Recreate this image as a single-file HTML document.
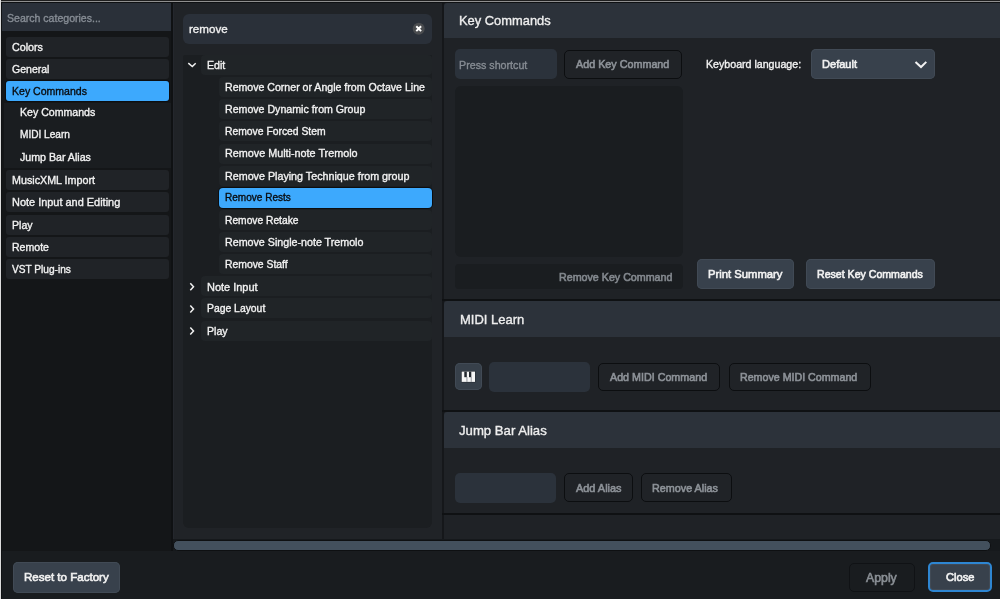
<!DOCTYPE html>
<html><head><meta charset="utf-8">
<style>
*{box-sizing:border-box;margin:0;padding:0}
html,body{width:1000px;height:599px;overflow:hidden;background:#191c1f;font-family:"Liberation Sans",sans-serif}
.a{position:absolute}
.t{position:absolute;white-space:nowrap;line-height:1;font-family:"Liberation Sans",sans-serif;-webkit-text-stroke:0.35px currentColor;transform-origin:0 0;will-change:transform}
.li{position:absolute;left:6px;width:163px;height:20px;border-radius:3px;background:#202327}
.li.sel,.tr.sel{background:#3da9fd;box-shadow:0 0 0 1px #0c0e10}
.tr{position:absolute;height:20px;border-radius:4px;background:#202427;left:0;right:0}
.hdr{position:absolute;left:444px;width:556px;background:#2c323a;border-top-left-radius:3px}
.cnt{position:absolute;left:444px;width:556px;background:#1f2226}
.dl{position:absolute;left:442px;width:558px;height:2px;background:#0f1113}
.fld{position:absolute;background:#2b323b;border-radius:5px}
.btn{position:absolute;border-radius:5px;border:1.6px solid #0c0e10;background:#202327}
.bl{position:absolute;border-radius:5px;background:#38414c;box-shadow:inset 0 0 0 1px #414a55}
</style></head><body>
<!-- left panel -->
<div class="a" style="left:2px;top:3px;width:169px;height:548px;background:#141618"></div>
<div class="a" style="left:2px;top:3px;width:169px;height:28px;background:#2a3039"></div>
<div class="li" style="top:37px"></div>
<div class="li" style="top:59px"></div>
<div class="li sel" style="top:81px"></div>
<div class="a" style="left:4px;top:103px;width:167px;height:65px;background:#1a1d20"></div>
<div class="li" style="top:170px"></div>
<div class="li" style="top:192px"></div>
<div class="li" style="top:215px"></div>
<div class="li" style="top:237px"></div>
<div class="li" style="top:259px"></div>
<div class="a" style="left:171px;top:3px;width:2px;height:548px;background:#0f1113"></div>

<!-- middle panel -->
<div class="a" style="left:173px;top:3px;width:269px;height:536px;background:#202327"></div>
<div class="a" style="left:173px;top:3px;width:1px;height:536px;background:#24272d"></div>
<div class="a" style="left:183px;top:14px;width:249px;height:29.5px;border-radius:6px;background:#2a3039"></div>
<svg class="a" style="left:412px;top:22px" width="14" height="14" viewBox="0 0 14 14"><circle cx="6.7" cy="6.7" r="6" fill="#4a4c4f"/><path d="M4.3 4.3L9.1 9.1M9.1 4.3L4.3 9.1" stroke="#ffffff" stroke-width="2" stroke-linecap="butt"/></svg>
<div class="a" style="left:183px;top:54.6px;width:249px;height:473.4px;border-radius:2px 0 6px 6px;background:#1b1e21">
  <div class="tr" style="left:18px;top:0.4px"></div>
  <div class="tr" style="left:36px;top:22.5px"></div>
  <div class="tr" style="left:36px;top:44.7px"></div>
  <div class="tr" style="left:36px;top:66.8px"></div>
  <div class="tr" style="left:36px;top:89px"></div>
  <div class="tr" style="left:36px;top:111.1px"></div>
  <div class="tr sel" style="left:36px;top:133.2px"></div>
  <div class="tr" style="left:36px;top:155.4px"></div>
  <div class="tr" style="left:36px;top:177.5px"></div>
  <div class="tr" style="left:36px;top:199.7px"></div>
  <div class="tr" style="left:18px;top:221.8px"></div>
  <div class="tr" style="left:18px;top:243.9px"></div>
  <div class="tr" style="left:18px;top:266.1px"></div>
</div>
<svg class="a" style="left:183px;top:55px" width="20" height="290" viewBox="0 0 20 290">
  <path d="M5.3 8.2L9.3 11.5L12.7 8.2" fill="none" stroke="#f2f2f2" stroke-width="1.5"/>
  <path d="M7.3 228.3L10.5 231.8L7.3 235.3" fill="none" stroke="#f2f2f2" stroke-width="1.5"/>
  <path d="M7.3 250.4L10.5 253.9L7.3 257.4" fill="none" stroke="#f2f2f2" stroke-width="1.5"/>
  <path d="M7.3 272.6L10.5 276.1L7.3 279.6" fill="none" stroke="#f2f2f2" stroke-width="1.5"/>
</svg>
<div class="a" style="left:441.5px;top:3px;width:2.5px;height:536px;background:#15171a"></div>

<!-- right panel -->
<div class="hdr" style="top:3px;height:35px"></div>
<div class="cnt" style="top:38px;height:261px"></div>
<div class="fld" style="left:455px;top:49px;width:101.5px;height:30px"></div>
<div class="btn" style="left:564px;top:49.5px;width:118px;height:29.5px"></div>
<div class="bl" style="left:810.5px;top:49.3px;width:124.5px;height:30.2px"></div>
<svg class="a" style="left:912px;top:58px" width="18" height="12" viewBox="0 0 18 12"><path d="M3.5 3.9L9 9L14.3 3.9" fill="none" stroke="#f2f2f2" stroke-width="2"/></svg>
<div class="a" style="left:455px;top:86.3px;width:227.5px;height:170.5px;border-radius:6px;background:#1a1d20"></div>
<div class="a" style="left:455px;top:264px;width:227.5px;height:24.8px;border-radius:4px;background:#1a1d20"></div>
<div class="bl" style="left:697px;top:258.7px;width:96.5px;height:30px"></div>
<div class="bl" style="left:806.2px;top:258.7px;width:128.8px;height:30px"></div>

<div class="dl" style="top:299px"></div>
<div class="hdr" style="top:301px;height:36px"></div>
<div class="cnt" style="top:337px;height:73px"></div>
<div class="bl" style="left:455px;top:363px;width:27px;height:27px;background:#37404a"></div>
<svg class="a" style="left:452px;top:360px" width="34" height="34" viewBox="0 0 34 34"><rect x="9.2" y="11.1" width="14.3" height="11.3" fill="#15181b" opacity="0.5"/><rect x="9.7" y="11.6" width="13.3" height="10.3" fill="#f6f6f6"/><rect x="12.3" y="11.6" width="2.5" height="5.6" fill="#22272d"/><rect x="17" y="11.6" width="2.3" height="5.6" fill="#22272d"/><rect x="14.6" y="17" width="0.7" height="4.9" fill="#6a7078"/><rect x="18.8" y="17" width="0.7" height="4.9" fill="#6a7078"/></svg>
<div class="fld" style="left:489px;top:361.6px;width:101px;height:30.4px"></div>
<div class="btn" style="left:597.8px;top:362.8px;width:121.8px;height:28.5px"></div>
<div class="btn" style="left:728.6px;top:362.8px;width:142.7px;height:28.5px"></div>

<div class="dl" style="top:410px"></div>
<div class="hdr" style="top:412px;height:36px"></div>
<div class="cnt" style="top:448px;height:65px"></div>
<div class="fld" style="left:455px;top:472.5px;width:101.4px;height:30px"></div>
<div class="btn" style="left:563.9px;top:473px;width:69px;height:29px"></div>
<div class="btn" style="left:641px;top:473px;width:90.6px;height:29px"></div>
<div class="dl" style="top:513px"></div>
<div class="cnt" style="top:515px;height:24px"></div>

<!-- scrollbar + footer -->
<div class="a" style="left:173px;top:539px;width:827px;height:12px;background:#16191c"></div>
<div class="a" style="left:172.5px;top:540.2px;width:818px;height:10.5px;border-radius:5px;background:#43505d;border:1px solid #0e1012"></div>
<div class="a" style="left:2px;top:551px;width:998px;height:48px;background:#191c1f"></div>
<div class="bl" style="left:13px;top:562.2px;width:107.2px;height:30.4px"></div>
<div class="btn" style="left:848.5px;top:563px;width:66.3px;height:28.5px;background:#191c1f;border-color:#101215"></div>
<div class="bl" style="left:928px;top:562.2px;width:63.6px;height:30px;border:2px solid #2e86d2"></div>

<!-- window frame -->
<div class="a" style="left:0;top:0;width:1000px;height:1px;background:#1e1e1e"></div>
<div class="a" style="left:0;top:1px;width:1000px;height:1px;background:#8f8f8f"></div>
<div class="a" style="left:0;top:2px;width:1000px;height:1px;background:#0e1012"></div>
<div class="a" style="left:0;top:0;width:1px;height:599px;background:#dcdcdc"></div>
<div class="a" style="left:1px;top:2px;width:1px;height:597px;background:#101214"></div>

<div class="t" style="left:6.50px;top:13.45px;font-size:10.568px;color:#878d95">Search categories...</div>
<div class="t" style="left:12.00px;top:41.92px;font-size:10.724px;color:#f2f2f2">Colors</div>
<div class="t" style="left:12.00px;top:63.88px;font-size:10.539px;color:#f2f2f2">General</div>
<div class="t" style="left:12.00px;top:85.68px;font-size:10.541px;color:#0a0c0f">Key Commands</div>
<div class="t" style="left:20.10px;top:107.04px;font-size:10.583px;color:#f2f2f2">Key Commands</div>
<div class="t" style="left:20.10px;top:130.35px;font-size:10.106px;color:#f2f2f2">MIDI Learn</div>
<div class="t" style="left:20.10px;top:151.59px;font-size:10.644px;color:#f2f2f2">Jump Bar Alias</div>
<div class="t" style="left:12.00px;top:174.73px;font-size:10.720px;color:#f2f2f2">MusicXML Import</div>
<div class="t" style="left:12.00px;top:197.04px;font-size:10.943px;color:#f2f2f2">Note Input and Editing</div>
<div class="t" style="left:12.00px;top:219.64px;font-size:10.586px;color:#f2f2f2">Play</div>
<div class="t" style="left:12.00px;top:242.06px;font-size:10.563px;color:#f2f2f2">Remote</div>
<div class="t" style="left:12.00px;top:264.92px;font-size:10.141px;color:#f2f2f2">VST Plug-ins</div>
<div class="t" style="left:189.00px;top:23.08px;font-size:11.605px;color:#f0f0f0">remove</div>
<div class="t" style="left:206.80px;top:60.00px;font-size:10.612px;color:#f2f2f2">Edit</div>
<div class="t" style="left:224.80px;top:81.94px;font-size:10.583px;color:#f2f2f2">Remove Corner or Angle from Octave Line</div>
<div class="t" style="left:224.80px;top:104.13px;font-size:10.614px;color:#f2f2f2">Remove Dynamic from Group</div>
<div class="t" style="left:224.80px;top:126.58px;font-size:10.354px;color:#f2f2f2">Remove Forced Stem</div>
<div class="t" style="left:224.80px;top:148.41px;font-size:10.804px;color:#f2f2f2">Remove Multi-note Tremolo</div>
<div class="t" style="left:224.80px;top:170.69px;font-size:10.735px;color:#f2f2f2">Remove Playing Technique from group</div>
<div class="t" style="left:224.80px;top:193.49px;font-size:10.048px;color:#0a0c0f">Remove Rests</div>
<div class="t" style="left:224.80px;top:215.54px;font-size:10.250px;color:#f2f2f2">Remove Retake</div>
<div class="t" style="left:224.80px;top:237.39px;font-size:10.694px;color:#f2f2f2">Remove Single-note Tremolo</div>
<div class="t" style="left:224.80px;top:259.86px;font-size:10.395px;color:#f2f2f2">Remove Staff</div>
<div class="t" style="left:206.80px;top:281.58px;font-size:10.986px;color:#f2f2f2">Note Input</div>
<div class="t" style="left:206.80px;top:304.31px;font-size:10.380px;color:#f2f2f2">Page Layout</div>
<div class="t" style="left:206.80px;top:326.36px;font-size:10.586px;color:#f2f2f2">Play</div>
<div class="t" style="left:459.40px;top:14.78px;font-size:12.904px;color:#eeeeee">Key Commands</div>
<div class="t" style="left:459.80px;top:312.60px;font-size:13.000px;color:#eeeeee">MIDI Learn</div>
<div class="t" style="left:458.60px;top:423.84px;font-size:13.179px;color:#eeeeee">Jump Bar Alias</div>
<div class="t" style="left:459.20px;top:59.74px;font-size:10.701px;color:#868c93">Press shortcut</div>
<div class="t" style="left:576.00px;top:58.77px;font-size:10.782px;color:#8d9298;-webkit-text-stroke:0.6px currentColor">Add Key Command</div>
<div class="t" style="left:706.00px;top:58.59px;font-size:10.646px;color:#f2f2f2">Keyboard language:</div>
<div class="t" style="left:821.70px;top:58.82px;font-size:11.076px;color:#f2f2f2;-webkit-text-stroke:0.6px currentColor">Default</div>
<div class="t" style="left:558.60px;top:271.85px;font-size:10.691px;color:#83888e;-webkit-text-stroke:0.6px currentColor">Remove Key Command</div>
<div class="t" style="left:708.00px;top:268.85px;font-size:11.280px;color:#f2f2f2;-webkit-text-stroke:0.6px currentColor">Print Summary</div>
<div class="t" style="left:817.40px;top:268.73px;font-size:10.595px;color:#f2f2f2;-webkit-text-stroke:0.6px currentColor">Reset Key Commands</div>
<div class="t" style="left:610.00px;top:371.52px;font-size:10.729px;color:#8d9298;-webkit-text-stroke:0.6px currentColor">Add MIDI Command</div>
<div class="t" style="left:740.30px;top:371.56px;font-size:10.678px;color:#8d9298;-webkit-text-stroke:0.6px currentColor">Remove MIDI Command</div>
<div class="t" style="left:575.80px;top:482.74px;font-size:10.934px;color:#8d9298;-webkit-text-stroke:0.6px currentColor">Add Alias</div>
<div class="t" style="left:652.20px;top:482.86px;font-size:10.793px;color:#8d9298;-webkit-text-stroke:0.6px currentColor">Remove Alias</div>
<div class="t" style="left:24.20px;top:571.82px;font-size:11.558px;color:#f2f2f2;-webkit-text-stroke:0.6px currentColor">Reset to Factory</div>
<div class="t" style="left:866.00px;top:571.58px;font-size:12.306px;color:#8a8f95;-webkit-text-stroke:0.6px currentColor">Apply</div>
<div class="t" style="left:945.60px;top:572.40px;font-size:11.108px;color:#f4f4f4;-webkit-text-stroke:0.6px currentColor">Close</div>
</body></html>
